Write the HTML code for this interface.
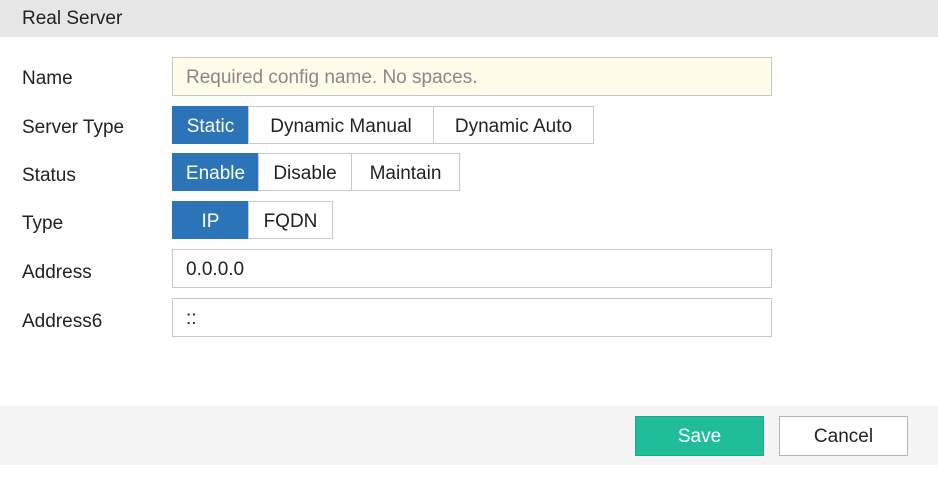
<!DOCTYPE html>
<html><head><style>
body{margin:0;width:938px;height:478px;background:#fff;font-family:"Liberation Sans",sans-serif;color:#222;position:relative;overflow:hidden}
.hdr{position:absolute;left:0;top:0;width:938px;height:37px;background:#e6e6e6;font-size:19px;line-height:37px;padding-left:22px;box-sizing:border-box}
.lbl{position:absolute;left:22px;font-size:19px}
.inp{position:absolute;left:172px;width:600px;height:39px;border:1px solid #c8c8c8;box-sizing:border-box;font-size:19px;line-height:40px;padding-left:13px}
.seg{position:absolute;left:172px;display:flex;height:38px}
.seg div{border:1px solid #c8c8c8;box-sizing:border-box;height:38px;font-size:19px;line-height:39px;text-align:center;margin-left:-1px}
.seg div:first-child{margin-left:0}
.seg .on{background:#2b74b8;border-color:#2b74b8;color:#fff}
.ftr{position:absolute;left:0;top:406px;width:938px;height:59px;background:#f4f4f4}
.btn{position:absolute;top:416px;width:129px;height:40px;box-sizing:border-box;font-size:19px;line-height:40px;text-align:center}
</style></head><body>
<div class="hdr">Real Server</div>
<div class="lbl" style="top:68px">Name</div>
<div class="inp" style="top:57px;background:#fdfdea;color:#888">Required config name. No spaces.</div>
<div class="lbl" style="top:117px">Server Type</div>
<div class="seg" style="top:106px"><div class="on" style="width:77px">Static</div><div style="width:186px">Dynamic Manual</div><div style="width:161px">Dynamic Auto</div></div>
<div class="lbl" style="top:165px">Status</div>
<div class="seg" style="top:153px"><div class="on" style="width:87px">Enable</div><div style="width:94px">Disable</div><div style="width:109px">Maintain</div></div>
<div class="lbl" style="top:213px">Type</div>
<div class="seg" style="top:201px"><div class="on" style="width:77px">IP</div><div style="width:85px">FQDN</div></div>
<div class="lbl" style="top:262px">Address</div>
<div class="inp" style="top:249px">0.0.0.0</div>
<div class="lbl" style="top:311px">Address6</div>
<div class="inp" style="top:298px">::</div>
<div class="ftr"></div>
<div class="btn" style="left:635px;background:#20bd99;border:1px solid #1fa886;color:#fff">Save</div>
<div class="btn" style="left:779px;background:#fff;border:1px solid #b4b4b4">Cancel</div>
</body></html>
